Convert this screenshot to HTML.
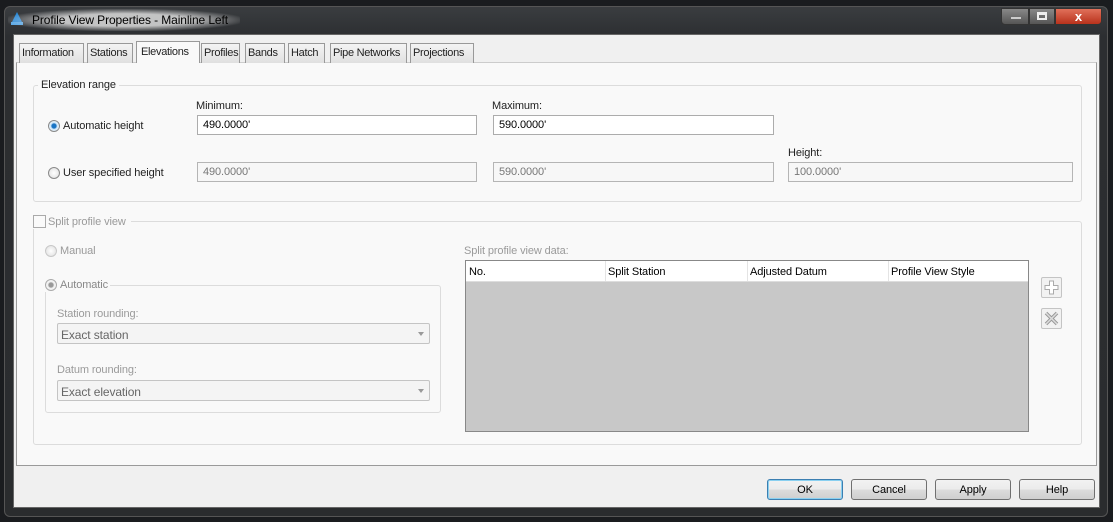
<!DOCTYPE html>
<html><head><meta charset="utf-8"><style>
*{box-sizing:border-box;margin:0;padding:0}
body{width:1113px;height:522px;background:#1a1c1f;position:relative;overflow:hidden;font-family:"Liberation Sans",sans-serif;font-size:11px;color:#000;letter-spacing:-0.1px}
.a{position:absolute;white-space:nowrap}
.frame{left:4px;top:6px;width:1104px;height:511px;background:linear-gradient(#3a3d40,#2c2e31 30px,#2a2c2e);border:1px solid #555;border-radius:6px}
.client{left:13px;top:34px;width:1087px;height:474px;background:#f0f0f0;border:1px solid #666}
.panel{left:16px;top:62px;width:1081px;height:404px;background:#f9f9f9;border:1px solid #9a9a9a;border-top-color:#ccc}
.tab{top:43px;height:20px;background:linear-gradient(#f4f4f4,#e0e0e0);border:1px solid #999;border-bottom:none;padding:3px 0 0 2px;font-size:11px;letter-spacing:-0.3px;color:#222;overflow:hidden}
.tab.sel{top:41px;height:22px;background:#f9f9f9;padding-top:4px;padding-left:4px}
.grp{border:1px solid #dcdcdc;border-radius:3px}
.lbl{font-size:11px;color:#222}
.dis{color:#9a9a9a}
.inp{height:20px;border:1px solid #acacac;background:#fff;padding:3px 5px;font-size:11px}
.inp.d{background:#f7f7f7;color:#777;border-color:#b5b5b5}
.radio{width:12px;height:12px;border-radius:50%;border:1px solid #8a8a8a;background:radial-gradient(#fff,#ddd)}
.btn{top:479px;height:21px;width:76px;border:1px solid #707070;border-radius:3px;background:linear-gradient(#f2f2f2,#ebebeb 50%,#dcdcdc 51%,#cfcfcf);text-align:center;padding-top:4px;font-size:11px}
.combo{height:21px;border:1px solid #c4c4c4;border-radius:2px;background:#f4f4f4;color:#666;padding:4px 3px;font-size:12px}
.combo:after{content:"";position:absolute;right:5px;top:8px;border:3px solid transparent;border-top:4px solid #999}
</style></head><body>
<div class="a frame"></div>
<div class="a" style="left:10px;top:11px;width:14px;height:15px"><svg width="14" height="15"><path d="M7 1 L12 11 L2 11 Z" fill="#2a8ad8"/><rect x="1" y="11" width="12" height="3" fill="#5aa9e8"/></svg></div>
<div class="a" style="left:8px;top:9px;width:232px;height:22px;border-radius:10px;background:radial-gradient(ellipse at center,rgba(220,220,220,0.85) 40%,rgba(200,200,200,0) 75%)"></div>
<div class="a" style="left:32px;top:13px;color:#000;font-size:12px">Profile View Properties - Mainline Left</div>
<div class="a" style="left:1001px;top:8px;width:28px;height:17px;border:1px solid #333;border-radius:0 0 0 4px;background:linear-gradient(#888,#555)"><div class="a" style="left:9px;top:8px;width:10px;height:2px;background:#ccc"></div></div>
<div class="a" style="left:1029px;top:8px;width:26px;height:17px;border:1px solid #333;background:linear-gradient(#888,#555)"><div class="a" style="left:7px;top:3px;width:10px;height:8px;border:2px solid #eee;border-top-width:3px"></div></div>
<div class="a" style="left:1055px;top:8px;width:47px;height:17px;border:1px solid #333;border-radius:0 0 4px 0;background:linear-gradient(#e0705a,#b8321c);color:#fff;font-weight:bold;font-size:13px;text-align:center;line-height:16px">x</div>
<div class="a client"></div>
<div class="a panel"></div>
<div class="a tab" style="left:19px;width:65px">Information</div>
<div class="a tab" style="left:87px;width:46px">Stations</div>
<div class="a tab sel" style="left:136px;width:64px;border-color:#999">Elevations</div>
<div class="a tab" style="left:201px;width:39px">Profiles</div>
<div class="a tab" style="left:245px;width:40px">Bands</div>
<div class="a tab" style="left:288px;width:37px">Hatch</div>
<div class="a tab" style="left:330px;width:77px">Pipe Networks</div>
<div class="a tab" style="left:410px;width:64px">Projections</div>

<div class="a grp" style="left:33px;top:85px;width:1049px;height:117px"></div>
<div class="a lbl" style="left:38px;top:79px;background:#f9f9f9;padding:0 3px">Elevation range</div>
<div class="a lbl" style="left:196px;top:100px">Minimum:</div>
<div class="a lbl" style="left:492px;top:100px">Maximum:</div>
<div class="a lbl" style="left:788px;top:147px">Height:</div>
<div class="a radio" style="left:48px;top:120px;background:radial-gradient(#1a74c4 30%,#cfe6f7 45%,#fff)"></div>
<div class="a lbl" style="left:63px;top:120px">Automatic height</div>
<div class="a radio" style="left:48px;top:167px"></div>
<div class="a lbl" style="left:63px;top:167px">User specified height</div>
<div class="a inp" style="left:197px;top:115px;width:280px">490.0000'</div>
<div class="a inp" style="left:493px;top:115px;width:281px">590.0000'</div>
<div class="a inp d" style="left:197px;top:162px;width:280px">490.0000'</div>
<div class="a inp d" style="left:493px;top:162px;width:281px">590.0000'</div>
<div class="a inp d" style="left:788px;top:162px;width:285px">100.0000'</div>

<div class="a grp" style="left:33px;top:221px;width:1049px;height:224px"></div>
<div class="a" style="left:31px;top:214px;width:100px;height:15px;background:#f9f9f9"></div>
<div class="a" style="left:33px;top:215px;width:13px;height:13px;border:1px solid #aaa;background:#fafafa"></div>
<div class="a lbl dis" style="left:48px;top:216px">Split profile view</div>
<div class="a radio" style="left:45px;top:245px;border-color:#c8c8c8"></div>
<div class="a lbl dis" style="left:60px;top:245px">Manual</div>
<div class="a grp" style="left:45px;top:285px;width:396px;height:128px"></div>
<div class="a" style="left:43px;top:278px;width:67px;height:14px;background:#f9f9f9"></div>
<div class="a radio" style="left:45px;top:279px;border-color:#aaa;background:radial-gradient(#999 30%,#eee 45%,#fff)"></div>
<div class="a lbl dis" style="left:60px;top:279px;color:#888">Automatic</div>
<div class="a lbl dis" style="left:57px;top:308px">Station rounding:</div>
<div class="a combo" style="left:57px;top:323px;width:373px">Exact station</div>
<div class="a lbl dis" style="left:57px;top:364px">Datum rounding:</div>
<div class="a combo" style="left:57px;top:380px;width:373px">Exact elevation</div>

<div class="a lbl dis" style="left:464px;top:245px">Split profile view data:</div>
<div class="a" style="left:465px;top:260px;width:564px;height:172px;border:1px solid #888;background:#c8c8c8">
 <div style="height:21px;background:#fff;border-bottom:1px solid #ddd;position:relative">
  <span class="a" style="left:3px;top:5px">No.</span>
  <span class="a" style="left:139px;top:0;height:20px;border-left:1px solid #e4e4e4"></span>
  <span class="a" style="left:142px;top:5px">Split Station</span>
  <span class="a" style="left:281px;top:0;height:20px;border-left:1px solid #e4e4e4"></span>
  <span class="a" style="left:284px;top:5px">Adjusted Datum</span>
  <span class="a" style="left:422px;top:0;height:20px;border-left:1px solid #e4e4e4"></span>
  <span class="a" style="left:425px;top:5px">Profile View Style</span>
 </div>
</div>
<div class="a" style="left:1041px;top:277px;width:21px;height:21px;border:1px solid #c4c4c4;border-radius:2px;background:#f2f2f2"><svg width="19" height="19"><path d="M7.5 3h4v4.5h4.5v4h-4.5v4.5h-4v-4.5h-4.5v-4h4.5z" fill="#fff" stroke="#aaa"/></svg></div>
<div class="a" style="left:1041px;top:308px;width:21px;height:21px;border:1px solid #c4c4c4;border-radius:2px;background:#f2f2f2"><svg width="19" height="19"><path d="M4 4L15 15M15 4L4 15" stroke="#999" stroke-width="3.5"/><path d="M4 4L15 15M15 4L4 15" stroke="#ddd" stroke-width="1.5"/></svg></div>

<div class="a btn" style="left:767px;border-color:#3c7fb1;box-shadow:inset 0 0 0 1px #8ad0f0">OK</div>
<div class="a btn" style="left:851px">Cancel</div>
<div class="a btn" style="left:935px">Apply</div>
<div class="a btn" style="left:1019px">Help</div>
</body></html>
